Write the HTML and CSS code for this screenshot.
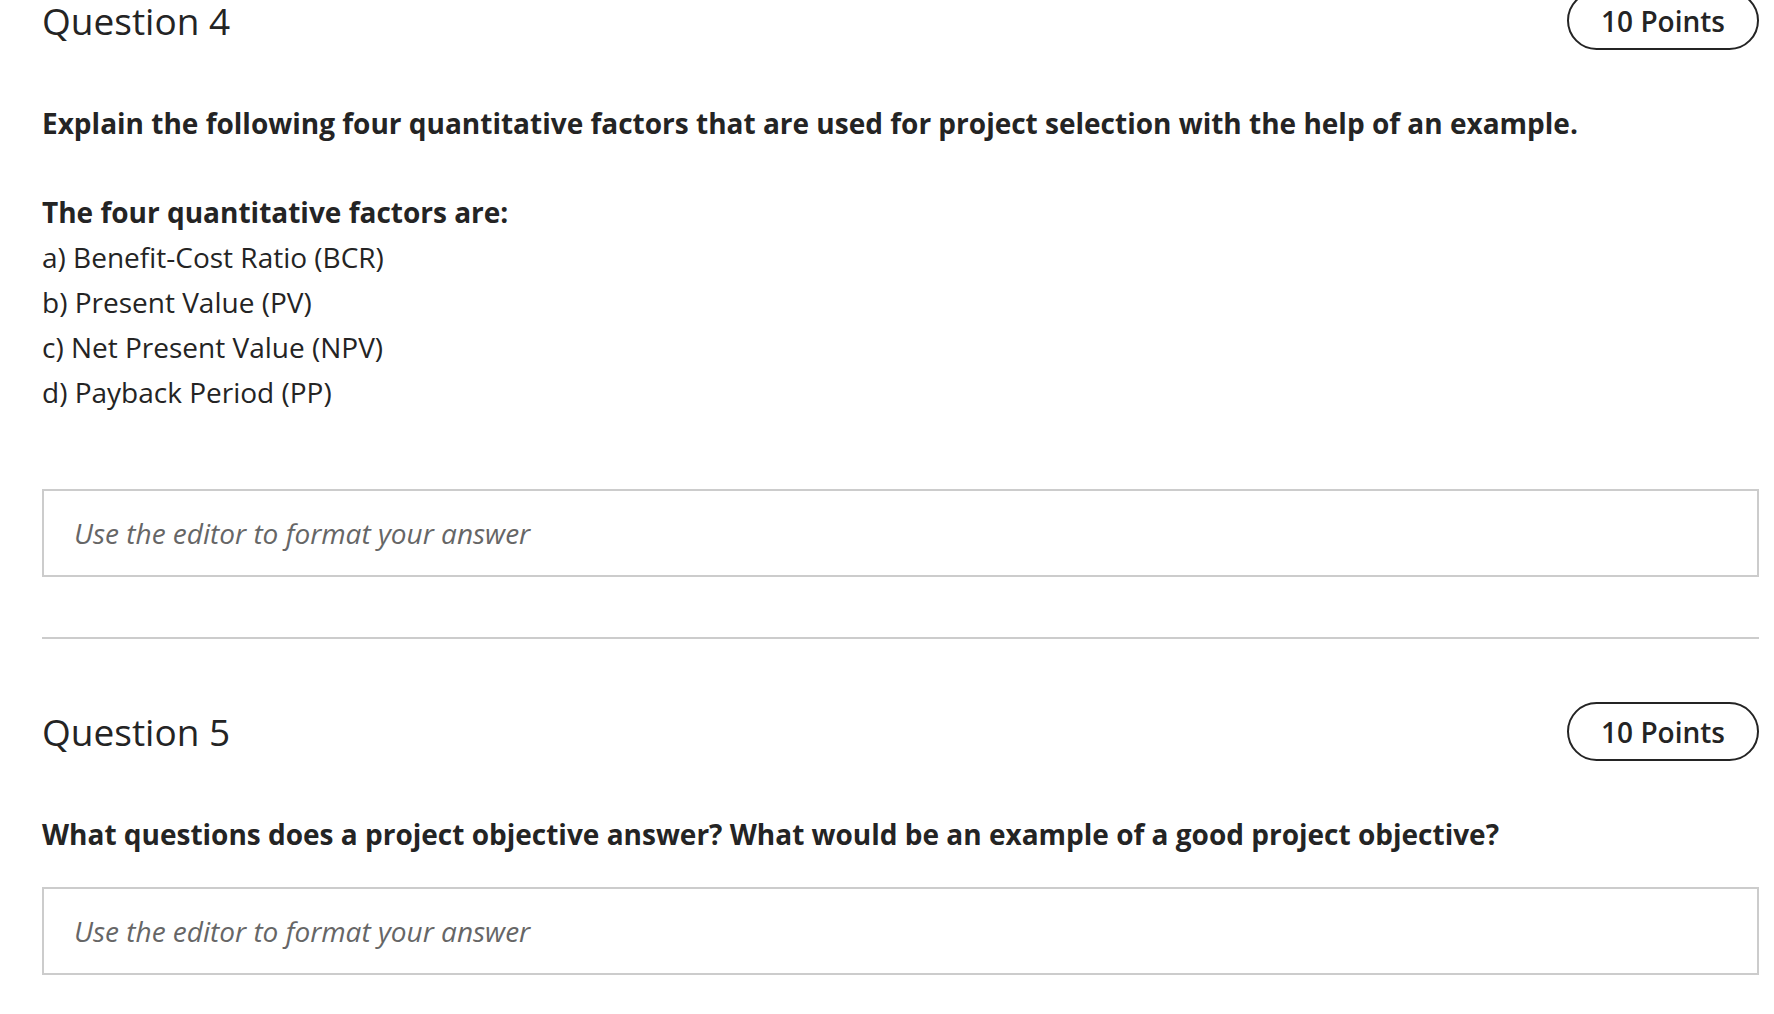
FILE: index.html
```html
<!DOCTYPE html>
<html lang="en">
  <head>
    <meta charset="UTF-8" />
    <title>Questions</title>
    <link rel="stylesheet" href="styles.css">
  </head>
  <body>
    <div class="quiz">
      <div class="question">
        <div class="question-head">
          <h2>Question 4</h2>
          <div class="points">10 Points</div>
        </div>
        <div class="prompt">
          <p><b>Explain the following four quantitative factors that are used for project selection with the help of an example.</b></p>
          <p><b>The four quantitative factors are:</b><br />
            a) Benefit-Cost Ratio (BCR)<br />
            b) Present Value (PV)<br />
            c) Net Present Value (NPV)<br />
            d) Payback Period (PP)</p>
        </div>
        <div class="answer list-gap">Use the editor to format your answer</div>
      </div>

      <hr class="divider" />

      <div class="question">
        <div class="question-head">
          <h2>Question 5</h2>
          <div class="points">10 Points</div>
        </div>
        <div class="prompt">
          <p><b>What questions does a project objective answer? What would be an example of a good project objective?</b></p>
        </div>
        <div class="answer">Use the editor to format your answer</div>
      </div>
    </div>
  </body>
</html>
```

FILE: styles.css
```css
body {
  font-family: "Open Sans", "Noto Sans", sans-serif;
  background-color: #ffffff;
  color: #242424;
  margin: 0;
}

.quiz {
  width: 1717px;
  padding-left: 42px;
  margin-top: -9px;
}

.question-head {
  display: flex;
  justify-content: space-between;
  align-items: center;
}

.question-head h2 {
  margin: 0;
  font-size: 37px;
  line-height: 40px;
  font-weight: normal;
}

.points {
  box-sizing: border-box;
  height: 59px;
  padding: 0 32px;
  border: 2px solid #242424;
  border-radius: 30px;
  display: flex;
  align-items: center;
  font-size: 28px;
  font-weight: 600;
}

.prompt {
  margin-top: 51px;
  font-size: 28px;
  line-height: 45px;
}

.prompt p {
  margin: 0;
}

.prompt p + p {
  margin-top: 44px;
}

.answer {
  box-sizing: border-box;
  height: 88px;
  margin-top: 30px;
  padding-left: 30px;
  border: 2px solid #cccccc;
  display: flex;
  align-items: center;
  font-size: 28px;
  font-style: italic;
  color: #666666;
}

.answer.list-gap {
  margin-top: 74px;
}

.divider {
  margin: 60px 0 63px 0;
  border: none;
  border-top: 2px solid #cccccc;
}
```
